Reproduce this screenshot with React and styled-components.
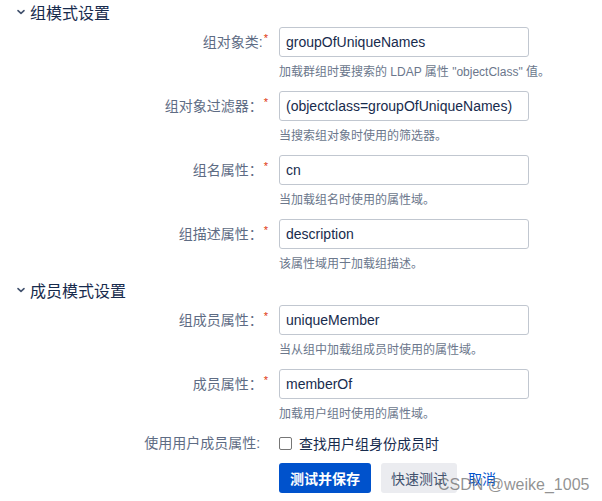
import React from 'react'
import styled, { createGlobalStyle } from 'styled-components'

const GlobalStyle = createGlobalStyle`
  body {
    margin: 0;
    background: #fff;
    font-family: "Liberation Sans", "Noto Sans CJK SC", sans-serif;
  }
`

const Page = styled.div`
  position: relative;
  width: 602px;
  height: 501px;
  overflow: hidden;
`

const SectionHeader = styled.div`
  display: flex;
  align-items: center;
  height: 24px;
  padding-left: 16px;
  margin-top: ${(p) => (p.first ? '0' : '5px')};
  margin-bottom: 3px;
  gap: 4px;
  font-size: 16px;
  color: #172b4d;
`

const Rows = styled.div`
  display: grid;
  grid-template-columns: 268px 250px;
  column-gap: 11px;
  row-gap: 10px;
`

const Label = styled.label`
  display: flex;
  justify-content: flex-end;
  align-items: ${(p) => (p.center ? 'center' : 'flex-start')};
  padding-top: ${(p) => (p.center ? '0' : '6px')};
  font-size: 14px;
  line-height: 18px;
  color: #5e6c84;
  white-space: nowrap;
`

const Required = styled.span`
  color: #de350b;
  font-size: 11px;
  line-height: 11px;
  margin-left: 1px;
  align-self: flex-start;
`

const Field = styled.div`
  display: flex;
  flex-direction: column;
`

const TextInput = styled.input`
  box-sizing: border-box;
  width: 250px;
  height: 30px;
  border: 1px solid #c1c7d0;
  border-radius: 3px;
  padding: 0 6px;
  font-family: inherit;
  font-size: 14px;
  color: #172b4d;
  background: #fff;
  outline: none;
`

const Help = styled.div`
  margin-top: 6px;
  font-size: 12px;
  line-height: 18px;
  color: #6b778c;
  white-space: nowrap;
`

const CheckRow = styled.label`
  display: flex;
  align-items: center;
  height: 20px;
  gap: 7px;
  font-size: 14px;
  color: #172b4d;
  white-space: nowrap;
`

const Box = styled.span`
  box-sizing: border-box;
  width: 13px;
  height: 13px;
  border: 1px solid #767676;
  border-radius: 2px;
  background: #fff;
`

const Buttons = styled.div`
  display: flex;
  align-items: center;
  gap: 10px;
`

const Button = styled.button`
  height: 30px;
  padding: 0 ${(p) => (p.primary ? '11px' : '10px')};
  border: none;
  border-radius: 3px;
  font-family: inherit;
  font-size: 14px;
  font-weight: ${(p) => (p.primary ? 700 : 400)};
  background: ${(p) => (p.primary ? '#0052cc' : '#ebecf0')};
  color: ${(p) => (p.primary ? '#fff' : '#42526e')};
`

const LinkButton = styled.a`
  font-size: 14px;
  color: #0052cc;
  margin-left: 1px;
`

const Watermark = styled.div`
  position: absolute;
  left: 438px;
  top: 476px;
  font-family: "Liberation Sans", Arial, sans-serif;
  font-size: 16px;
  color: rgba(110, 110, 110, 0.75);
  white-space: nowrap;
`

const Chevron = () => (
  <svg width="10" height="10" viewBox="0 0 10 10">
    <path d="M2 3.6 L5 6.4 L8 3.6" fill="none" stroke="#42526e" strokeWidth="1.6" strokeLinecap="round" strokeLinejoin="round" />
  </svg>
)

const FormRow = ({ label, value, help }) => (
  <>
    <Label>
      {label}
      <Required>*</Required>
    </Label>
    <Field>
      <TextInput defaultValue={value} />
      <Help>{help}</Help>
    </Field>
  </>
)

const groupRows = [
  { label: '组对象类:', value: 'groupOfUniqueNames', help: '加载群组时要搜索的 LDAP 属性 "objectClass" 值。' },
  { label: '组对象过滤器：', value: '(objectclass=groupOfUniqueNames)', help: '当搜索组对象时使用的筛选器。' },
  { label: '组名属性：', value: 'cn', help: '当加载组名时使用的属性域。' },
  { label: '组描述属性：', value: 'description', help: '该属性域用于加载组描述。' },
]

const memberRows = [
  { label: '组成员属性：', value: 'uniqueMember', help: '当从组中加载组成员时使用的属性域。' },
  { label: '成员属性：', value: 'memberOf', help: '加载用户组时使用的属性域。' },
]

export default function App() {
  return (
    <Page>
      <GlobalStyle />
      <SectionHeader first>
        <Chevron />
        组模式设置
      </SectionHeader>
      <Rows>
        {groupRows.map((r) => (
          <FormRow key={r.label} {...r} />
        ))}
      </Rows>
      <SectionHeader>
        <Chevron />
        成员模式设置
      </SectionHeader>
      <Rows>
        {memberRows.map((r) => (
          <FormRow key={r.label} {...r} />
        ))}
        <Label center>使用用户成员属性:&nbsp;&nbsp;</Label>
        <CheckRow>
          <Box />
          查找用户组身份成员时
        </CheckRow>
        <div />
        <Buttons>
          <Button primary>测试并保存</Button>
          <Button>快速测试</Button>
          <LinkButton>取消</LinkButton>
        </Buttons>
      </Rows>
      <Watermark>CSDN @weike_1005</Watermark>
    </Page>
  )
}
